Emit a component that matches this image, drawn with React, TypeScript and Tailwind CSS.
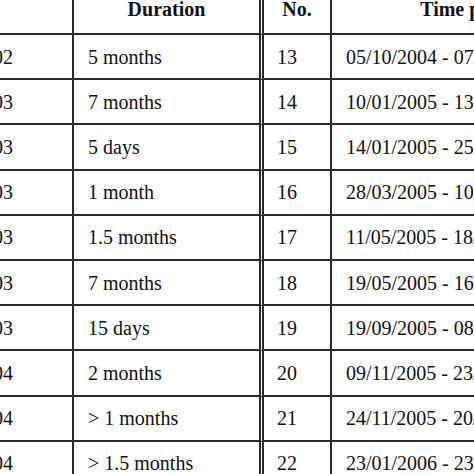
const left = [
  { period: "01/07/2002 - 01/12/2002", duration: "5 months" },
  { period: "15/02/2003 - 15/09/2003", duration: "7 months" },
  { period: "10/03/2003 - 15/03/2003", duration: "5 days" },
  { period: "02/04/2003 - 02/05/2003", duration: "1 month" },
  { period: "20/05/2003 - 05/07/2003", duration: "1.5 months" },
  { period: "01/06/2003 - 31/12/2003", duration: "7 months" },
  { period: "12/09/2003 - 27/09/2003", duration: "15 days" },
  { period: "03/01/2004 - 03/03/2004", duration: "2 months" },
  { period: "18/03/2004 - 24/04/2004", duration: "> 1 months" },
  { period: "07/05/2004 - 29/06/2004", duration: "> 1.5 months" },
];

const right = [
  { no: 13, period: "05/10/2004 - 07/03/2005" },
  { no: 14, period: "10/01/2005 - 13/02/2005" },
  { no: 15, period: "14/01/2005 - 25/01/2005" },
  { no: 16, period: "28/03/2005 - 10/05/2005" },
  { no: 17, period: "11/05/2005 - 18/05/2005" },
  { no: 18, period: "19/05/2005 - 16/06/2005" },
  { no: 19, period: "19/09/2005 - 08/10/2005" },
  { no: 20, period: "09/11/2005 - 23/11/2005" },
  { no: 21, period: "24/11/2005 - 20/12/2005" },
  { no: 22, period: "23/01/2006 - 23/02/2006" },
];

export default function App() {
  return (
    <div className="w-[474px] h-[474px] overflow-hidden bg-white text-[#111] font-['Liberation_Serif',serif] text-[20px]">
      {/* table is cropped: left and top sit off-screen like the source scan */}
      <table className="table-fixed border-separate border-spacing-0 -ml-[200px] -mt-[16px] w-[813px]">
        <colgroup>
          <col className="w-[272px]" />
          <col className="w-[187px]" />
          <col className="w-[71px]" />
          <col className="w-[283px]" />
        </colgroup>
        <thead>
          <tr className="h-[51px]">
            <th className="border-b-2 border-[#2a2a2a] text-center font-bold">Time period</th>
            <th className="border-b-2 border-l-2 border-[#2a2a2a] text-center font-bold">Duration</th>
            <th className="border-b-2 border-l-[5px] border-double border-[#2a2a2a] text-center font-bold">No.</th>
            <th className="border-b-2 border-l-2 border-[#2a2a2a] text-center font-bold">Time period</th>
          </tr>
        </thead>
        <tbody>
          {left.map((row, i) => (
            <tr key={i} className="h-[45.2px]">
              <td className="border-b-2 border-[#2a2a2a] pl-[14px] whitespace-nowrap">{row.period}</td>
              <td className="border-b-2 border-l-2 border-[#2a2a2a] pl-[14px] whitespace-nowrap">{row.duration}</td>
              <td className="border-b-2 border-l-[5px] border-double border-[#2a2a2a] pl-[13px]">{right[i].no}</td>
              <td className="border-b-2 border-l-2 border-[#2a2a2a] pl-[14px] whitespace-nowrap">{right[i].period}</td>
            </tr>
          ))}
        </tbody>
      </table>
    </div>
  );
}
